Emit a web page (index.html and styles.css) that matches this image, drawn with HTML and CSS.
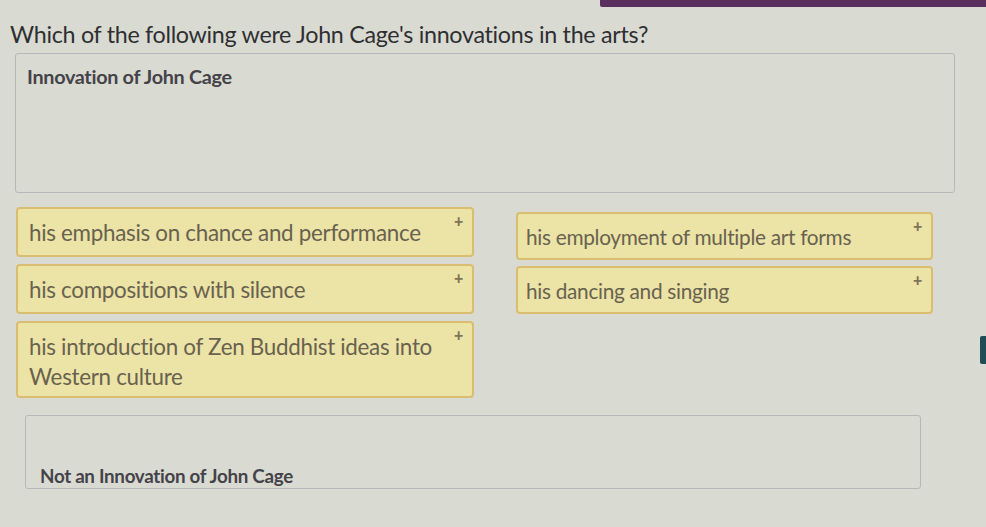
FILE: index.html
```html
<!DOCTYPE html>
<html lang="en">
<head>
<meta charset="utf-8">
<title>John Cage</title>
<link rel="stylesheet" href="styles.css">
</head>
<body>
<div class="topbar"><div class="topbar-fill"></div></div>
<main class="page">
  <h1 class="question">Which of the following were John Cage's innovations in the arts?</h1>
  <section class="bucket bucket-top">
    <h2 class="bucket-label">Innovation of John Cage</h2>
  </section>
  <div class="tiles">
    <div class="col col-left">
      <div class="tile"><span class="tile-text">his emphasis on chance and performance</span><span class="plus">+</span></div>
      <div class="tile"><span class="tile-text">his compositions with silence</span><span class="plus">+</span></div>
      <div class="tile tile-tall"><span class="tile-text">his introduction of Zen Buddhist ideas into Western culture</span><span class="plus">+</span></div>
    </div>
    <div class="col col-right">
      <div class="tile"><span class="tile-text">his employment of multiple art forms</span><span class="plus">+</span></div>
      <div class="tile"><span class="tile-text">his dancing and singing</span><span class="plus">+</span></div>
    </div>
  </div>
  <section class="bucket bucket-bottom">
    <h2 class="bucket-label">Not an Innovation of John Cage</h2>
  </section>
</main>
<div class="side-tab"></div>
</body>
</html>
```

FILE: styles.css
```css
html, body {
  margin: 0;
  padding: 0;
  width: 986px;
  height: 527px;
  overflow: hidden;
  background: #d9dad1;
  font-family: Lato, "Open Sans", sans-serif;
}
.topbar {
  display: flex;
  justify-content: flex-end;
  height: 7px;
}
.topbar-fill {
  width: 386px;
  background: #5a2f5f;
  border-bottom-left-radius: 2px;
}
.page {
  padding: 11px 0 0 10px;
}
.question {
  margin: 0;
  font-size: 23.3px;
  font-weight: 400;
  color: #2f2f33;
  letter-spacing: -0.3px;
  line-height: 32px;
}
.bucket {
  border: 1px solid #b4b8bd;
  border-radius: 3px;
  box-sizing: border-box;
}
.bucket-top {
  margin: 3px 0 0 5px;
  width: 940px;
  height: 140px;
  padding: 10px 0 0 11px;
}
.bucket-label {
  margin: 0;
  font-size: 19.8px;
  font-weight: 700;
  color: #45434a;
  letter-spacing: -0.3px;
}
.tiles {
  display: flex;
  gap: 42px;
  margin: 14px 0 0 6px;
}
.col {
  display: flex;
  flex-direction: column;
  gap: 7px;
}
.col-left { width: 458px; }
.col-right { width: 417px; margin-top: 5px; gap: 6px; }
.tile {
  position: relative;
  box-sizing: border-box;
  height: 50px;
  background: #ece3a6;
  border: 2px solid #dbbd70;
  border-radius: 4px;
  padding: 0 36px 0 11px;
  display: flex;
  align-items: center;
  color: #68624f;
  font-size: 22.4px;
  letter-spacing: -0.3px;
}
.col-right .tile { height: 48px; padding-left: 8px; font-size: 20.8px; }
.tile-tall {
  height: 77px;
  line-height: 30px;
  padding-right: 30px;
  align-items: flex-start;
  padding-top: 9px;
}
.plus {
  position: absolute;
  top: 4px;
  right: 9px;
  font-size: 16px;
  font-weight: 900;
  color: #7e7556;
  line-height: 1;
}
.bucket-bottom {
  margin: 17px 0 0 15px;
  width: 896px;
  height: 74px;
  display: flex;
  align-items: flex-end;
  padding: 0 0 1px 14px;
}
.bucket-bottom .bucket-label {
  font-size: 18.8px;
  line-height: 22px;
}
.side-tab {
  position: absolute;
  top: 336px;
  right: 0;
  width: 6px;
  height: 28px;
  background: #1f4c55;
  border-radius: 2px 0 0 2px;
}
```
